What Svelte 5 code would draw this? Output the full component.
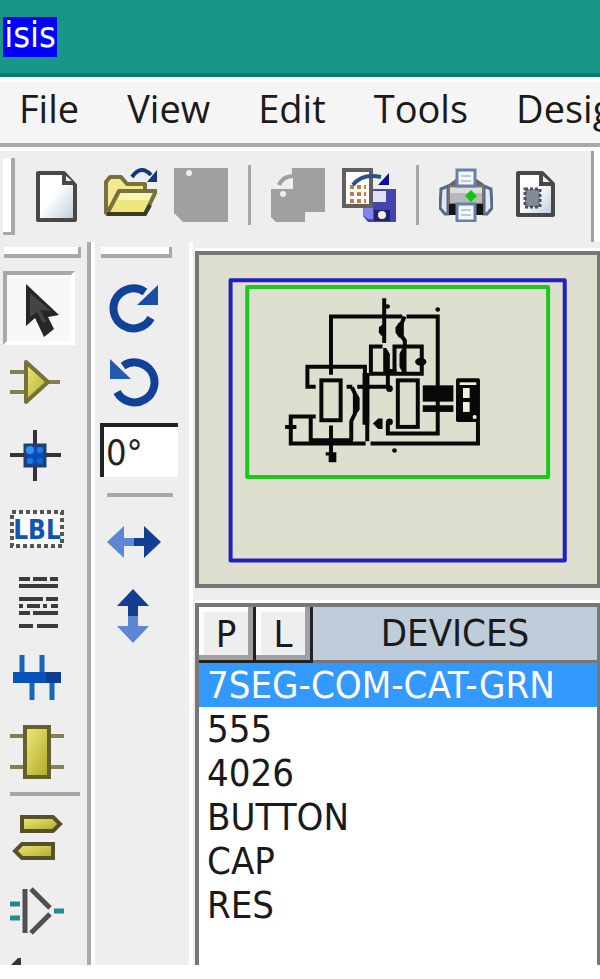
<script>
  let mode = "select";
  let angle = "0°";
  let selected = "7SEG-COM-CAT-GRN";

  const menus = ["File", "View", "Edit", "Tools", "Design"];
  const devices = ["7SEG-COM-CAT-GRN", "555", "4026", "BUTTON", "CAP", "RES"];
  const modes = [
    { id: "select", label: "Selection mode" },
    { id: "component", label: "Component mode" },
    { id: "junction", label: "Junction dot mode" },
    { id: "label", label: "Wire label mode" },
    { id: "script", label: "Text script mode" },
    { id: "bus", label: "Bus mode" },
    { id: "subcircuit", label: "Subcircuit mode" },
    { id: "terminal", label: "Terminals mode" },
    { id: "pin", label: "Device pins mode" },
    { id: "graph", label: "Graph mode" },
  ];
</script>

<div class="app">
  <header class="titlebar">
    <div class="logo">isis</div>
  </header>

  <nav class="menubar">
    {#each menus as menu}
      <button class="menu">{menu}</button>
    {/each}
  </nav>

  <div class="toolbar">
    <div class="grip"></div>
    <button class="tool" aria-label="New design">
      <svg viewBox="0 0 54 54">
        <defs>
          <linearGradient id="paper" x1="0" y1="0" x2="1" y2="1">
            <stop offset="0.45" stop-color="#fff" />
            <stop offset="1" stop-color="#b9cadb" />
          </linearGradient>
          <linearGradient id="gold" x1="0" y1="0" x2="1" y2="1">
            <stop offset="0" stop-color="#f0ea78" />
            <stop offset="1" stop-color="#b0a82c" />
          </linearGradient>
        </defs>
        <path d="M6 5H32L43 17V52H6Z" fill="url(#paper)" stroke="#484848" stroke-width="4" stroke-linejoin="round" />
        <path d="M32 6V15H42" fill="#eee" stroke="#484848" stroke-width="4" />
      </svg>
    </button>
    <button class="tool" aria-label="Open design">
      <svg viewBox="0 0 54 54">
        <path d="M3 46V14L7 9H18L24 16H42V25" fill="#f3e995" stroke="#77713b" stroke-width="4" stroke-linejoin="round" />
        <path d="M4 46L16 23H53L42 46Z" fill="#eee77f" stroke="#77713b" stroke-width="4" stroke-linejoin="round" />
        <path d="M18 25H49L46 32H15Z" fill="#fbf5b8" />
        <path d="M4 46H42L47 37" fill="none" stroke="#3e3b20" stroke-width="4" />
        <path d="M29 9Q38 -4 48 7" fill="none" stroke="#16377c" stroke-width="4" />
        <path d="M54 2V14H44Z" fill="#16377c" />
      </svg>
    </button>
    <button class="tool" aria-label="Save design" disabled>
      <svg viewBox="0 0 54 54">
        <path d="M0 0H54V54H9L0 45Z" fill="#a0a0a0" />
        <circle cx="15" cy="5" r="3" fill="#eee" />
      </svg>
    </button>
    <div class="divider"></div>
    <button class="tool" aria-label="Import section" disabled>
      <svg viewBox="0 0 54 54">
        <path d="M21 0H54V44H34V54H5L0 49V21H21Z" fill="#a0a0a0" />
        <path d="M8 17Q12 8 22 9V21H16Z" fill="#eee" />
        <path d="M8 17Q12 8 22 8" fill="none" stroke="#a0a0a0" stroke-width="4" />
        <circle cx="12" cy="26" r="3" fill="#eee" />
      </svg>
    </button>
    <button class="tool" aria-label="Export section">
      <svg viewBox="0 0 54 54">
        <path d="M22 21H54V54H26L21 48Z" fill="#4344ad" />
        <path d="M22 38H31V51H26L21 47Z" fill="#8385ec" />
        <path d="M30 23H44V34H30Z" fill="#dfe3f1" />
        <path d="M32 42H48V53H32Z" fill="#20236f" />
        <circle cx="40" cy="47" r="4" fill="#f4f3d8" />
        <path d="M2 2H29V38H2Z" fill="#fff" stroke="#606060" stroke-width="4" />
        <path d="M8 19H24M8 26H24M8 33H24" fill="none" stroke="#c97943" stroke-width="4" stroke-dasharray="4 3" />
        <path d="M11 17Q20 5 39 9" fill="none" stroke="#28518e" stroke-width="4" />
        <path d="M47 5V17H36Z" fill="#0c10a0" />
      </svg>
    </button>
    <div class="divider"></div>
    <button class="tool" aria-label="Print">
      <svg viewBox="0 0 54 54">
        <path d="M10 16L18 10H36L45 16V22H10Z" fill="#666" />
        <path d="M2 21L9 18V46H6L1 40Z" fill="#e3e9f2" stroke="#596a82" stroke-width="3" />
        <path d="M52 21L45 18V46H48L53 40Z" fill="#e3e9f2" stroke="#596a82" stroke-width="3" />
        <path d="M10 18H44V36H10Z" fill="#b9b9b9" stroke="#747474" stroke-width="2" />
        <path d="M11 20H43V25H11Z" fill="#ddd" />
        <path d="M10 36H44V47H10Z" fill="#151515" />
        <path d="M18 2H36V18H18Z" fill="#f5f8fb" stroke="#6680ad" stroke-width="3" />
        <path d="M18 36H36V53H18Z" fill="#f5f8fb" stroke="#6680ad" stroke-width="3" />
        <path d="M22 8H32M22 13H32M22 42H32M22 47H32" stroke="#bcc9d8" stroke-width="2" />
        <path d="M32 22L38 28L32 34L26 28Z" fill="#13c50f" />
      </svg>
    </button>
    <button class="tool" aria-label="Mark output area">
      <svg viewBox="0 0 54 54">
        <path d="M8 5H32L43 16V47H8Z" fill="url(#paper)" stroke="#484848" stroke-width="4" stroke-linejoin="round" />
        <path d="M31 6V16H42" fill="#eee" stroke="#484848" stroke-width="4" />
        <rect x="15" y="21" width="15" height="18" fill="#858b94" stroke="#4c535e" stroke-width="3" stroke-dasharray="3 2" />
      </svg>
    </button>
    <div class="toolbar-end"></div>
  </div>

  <main>
    <aside class="modes">
      <div class="grip-top"></div>
      {#each modes as item}
        {#if item.id === "terminal"}
          <hr />
        {/if}
        <button
          class="mode"
          class:active={mode === item.id}
          aria-label={item.label}
          on:click={() => (mode = item.id)}
        >
          <svg viewBox="0 0 54 54">
            {#if item.id === "select"}
              <path d="M16 3V45L25 37L34 56L44 48L38 36L49 34Z" fill="#262626" />
              <path d="M20 12V36L27 31L33 42L36 40L30 29L41 30Z" fill="#444" />
            {:else if item.id === "component"}
              <path d="M0 17H16M0 37H16M38 27H50" stroke="#858052" stroke-width="4" />
              <path d="M16 7L38 27L16 47Z" fill="url(#gold)" stroke="#77723a" stroke-width="4" stroke-linejoin="round" />
            {:else if item.id === "junction"}
              <path d="M25 1V52M0 26H51" stroke="#333" stroke-width="4" />
              <rect x="15" y="16" width="20" height="21" fill="#0b4bb3" stroke="#22406d" stroke-width="3" />
              <circle cx="20" cy="21" r="4" fill="#2f91ff" />
              <circle cx="30" cy="21" r="3" fill="#1d7bec" />
              <circle cx="20" cy="32" r="3" fill="#1d7bec" />
              <circle cx="30" cy="32" r="3" fill="#0d62d8" />
            {:else if item.id === "label"}
              <rect x="2" y="9" width="50" height="34" fill="#fafafa" stroke="#555" stroke-width="4" stroke-dasharray="4 3" />
              <text x="27" y="36" text-anchor="middle">LBL</text>
            {:else if item.id === "script"}
              <g stroke="#3c3c3c" stroke-width="4">
                <path d="M9 2H48" stroke-dasharray="11 3 14 3" />
                <path d="M9 9H48" />
                <path d="M9 22H48" stroke-dasharray="24 3" />
                <path d="M9 29H48" stroke-dasharray="4 4 13 3" />
                <path d="M9 36H48" stroke-dasharray="11 3 30 3" />
                <path d="M9 49H48" stroke-dasharray="14 4 30 3" />
              </g>
            {:else if item.id === "bus"}
              <path d="M12 4V26M32 4V26M22 26V49M42 26V49" stroke="#1767b8" stroke-width="5" />
              <path d="M3 21H51V32H3Z" fill="#0752bd" />
              <path d="M36 21H51V32H36Z" fill="#0b3f93" />
            {:else if item.id === "subcircuit"}
              <path d="M0 11H54M0 42H54" stroke="#858052" stroke-width="4" />
              <rect x="15" y="2" width="24" height="50" fill="url(#gold)" stroke="#66612c" stroke-width="4" />
            {:else if item.id === "terminal"}
              <path d="M12 7H43L50 14L43 21H12Z" fill="url(#gold)" stroke="#55512b" stroke-width="4" />
              <path d="M43 34H12L5 41L12 48H43Z" fill="url(#gold)" stroke="#55512b" stroke-width="4" />
            {:else if item.id === "pin"}
              <path d="M15 5V49M21 5L40 24M21 49L40 30" fill="none" stroke="#505050" stroke-width="5" />
              <path d="M0 20H10M0 34H10M44 27H54" stroke="#248b8b" stroke-width="5" />
            {:else}
              <path d="M0 8L8 0H11V8H0Z" fill="#333" />
              <path d="M2 8V50H50" fill="none" stroke="#333" stroke-width="4" />
            {/if}
          </svg>
        </button>
      {/each}
    </aside>

    <aside class="orient">
      <div class="grip-top"></div>
      <button class="turn" aria-label="Rotate clockwise">
        <svg viewBox="0 0 54 54">
          <path d="M38 11A20 20 0 1 0 44 37" fill="none" stroke="#12419a" stroke-width="8" />
          <path d="M51 4V24H30Z" fill="#1c4da5" />
        </svg>
      </button>
      <button class="turn" aria-label="Rotate anti-clockwise">
        <svg viewBox="0 0 54 54">
          <path d="M16 11A20 20 0 1 1 10 37" fill="none" stroke="#12419a" stroke-width="8" />
          <path d="M3 4V24H24Z" fill="#2459b0" />
        </svg>
      </button>
      <input class="angle" type="text" aria-label="Rotation angle" bind:value={angle} />
      <hr />
      <button class="turn" aria-label="Mirror horizontally">
        <svg viewBox="0 0 54 54">
          <path d="M0 27L17 11V23H27V31H17V43Z" fill="#5c86d6" />
          <path d="M54 27L37 11V23H27V31H37V43Z" fill="#123f92" />
        </svg>
      </button>
      <button class="turn" aria-label="Mirror vertically">
        <svg viewBox="0 0 54 54">
          <path d="M26 0L10 17H21V27H31V17H42Z" fill="#123f92" />
          <path d="M26 54L10 37H21V27H31V37H42Z" fill="#5c86d6" />
        </svg>
      </button>
    </aside>

    <section class="side">
      <div class="preview">
        <svg viewBox="24 45 1197 990" role="img" aria-label="Design overview">
          <g fill="none" stroke-width="12" stroke-linejoin="round">
            <rect x="119" y="121" width="1005" height="843" stroke="#2020c0" />
            <rect x="169" y="141" width="905" height="572" stroke="#1cc81c" />
          </g>
          <g fill="none" stroke="#080808" stroke-width="12">
            <!-- supply rail and upper wiring -->
            <path d="M421 405V230H635M648 230H742V582H592V545" />
            <path d="M581 175V310M642 230L634 250V290L643 302V325" />
            <path d="M576 320H541V400M535 402H694V320H612V402" />
            <path d="M592 400V445M500 441H592M468 441H485" />
            <path d="M375 441H350V381H523V555" />
            <path d="M530 400V605" />
            <!-- timer and counter bodies -->
            <rect x="392" y="422" width="58" height="120" />
            <rect x="622" y="422" width="60" height="140" />
            <path d="M484 443L493 462V522L482 545V600" />
            <!-- lower wiring -->
            <path d="M375 531H300V612H525M540 612H863V545M360 531V605M421 558V645M283 562H317" />
            <path d="M357 605H487" stroke-width="18" />
          </g>
          <g fill="#080808">
            <path d="M576 254H586V288H572L565 278V262Z" />
            <path d="M637 248H625L615 263V278L625 293H637Z" />
            <path d="M578 325H587L598 343V388H618V406H578Z" />
            <path d="M636 325H648V398H636L627 382V342Z" />
            <path d="M487 462H500L507 475V510L500 520H487Z" />
            <path d="M516 400H536V555H516Z" />
            <ellipse cx="691" cy="366" rx="17" ry="12" />
            <circle cx="591" cy="200" r="7" />
            <circle cx="597" cy="447" r="10" />
            <circle cx="597" cy="547" r="10" />
            <circle cx="742" cy="209" r="7" />
            <circle cx="612" cy="633" r="7" />
            <path d="M547 552L563 537H576V568H563Z" />
            <path d="M405 638H437V668H414V648H405Z" />
            <rect x="697" y="437" width="92" height="49" />
            <rect x="697" y="497" width="92" height="20" />
            <rect x="797" y="416" width="72" height="131" rx="5" />
          </g>
          <g fill="#f2f0df">
            <rect x="808" y="428" width="50" height="8" />
            <rect x="818" y="445" width="20" height="30" />
            <rect x="818" y="487" width="20" height="30" />
            <circle cx="853" cy="532" r="6" />
          </g>
        </svg>
      </div>

      <div class="picker">
        <div class="picker-head">
          <button class="pick" aria-label="Pick devices">P</button>
          <button class="pick" aria-label="Library manager">L</button>
          <h2>DEVICES</h2>
        </div>
        <ul>
          {#each devices as device}
            <li>
              <button
                class="device"
                class:selected={selected === device}
                on:click={() => (selected = device)}
              >
                {device}
              </button>
            </li>
          {/each}
        </ul>
      </div>
    </section>
  </main>
</div>

<style>
  :global(body) {
    margin: 0;
    background: #fff;
  }

  .app {
    display: flex;
    flex-direction: column;
    height: 100vh;
    padding-bottom: 14px;
    box-sizing: border-box;
    overflow: hidden;
    font-family: "DejaVu Sans Condensed", "DejaVu Sans", sans-serif;
    color: #1a1a1a;
  }

  button {
    margin: 0;
    padding: 0;
    border: none;
    background: none;
    color: inherit;
    font: inherit;
  }

  svg {
    display: block;
  }

  .titlebar {
    flex: none;
    display: flex;
    align-items: center;
    height: 73px;
    padding-left: 3px;
    background: #189788;
    border-bottom: 4px solid #078073;
  }

  .logo {
    width: 54px;
    height: 40px;
    background: #0000fe;
    color: #fff;
    font-size: 36px;
    line-height: 36px;
    text-align: center;
  }

  .menubar {
    flex: none;
    display: flex;
    height: 61px;
    background: #f5f5f5;
    border-top: 5px solid #fff;
    border-bottom: 4px solid #aaa;
    overflow: hidden;
  }

  .menu {
    flex: none;
    height: 52px;
    padding: 0 24px;
    font-family: "Open Sans", "Noto Sans", sans-serif;
    font-size: 38px;
    line-height: 52px;
  }

  .menu:first-child {
    padding-left: 19px;
  }

  .toolbar {
    flex: none;
    display: flex;
    align-items: center;
    gap: 17px;
    height: 91px;
    padding-left: 3px;
    border-top: 4px solid #fff;
    background: #eee;
  }

  .grip {
    width: 8px;
    height: 74px;
    border-right: 4px solid #a8a8a8;
    border-bottom: 3px solid #a8a8a8;
    background: #fff;
  }

  .tool {
    flex: none;
    width: 54px;
    height: 54px;
    margin-bottom: 4px;
  }

  .divider {
    flex: none;
    width: 3px;
    height: 60px;
    margin: 0 3px 4px;
    background: #a8a8a8;
  }

  .toolbar-end {
    width: 6px;
    height: 100%;
    margin-left: auto;
    border-left: 3px solid #a0a0a0;
    background: #fff;
  }

  main {
    flex: 1;
    display: flex;
    min-height: 0;
    overflow: hidden;
    background: #eee;
  }

  .modes {
    flex: none;
    width: 87px;
    border-right: 4px solid #aaa;
    overflow: hidden;
  }

  .grip-top {
    height: 7px;
    margin: 5px 6px 13px 4px;
    border-right: 3px solid #a8a8a8;
    border-bottom: 4px solid #a8a8a8;
    background: #fff;
  }

  .mode {
    display: flex;
    align-items: center;
    width: 72px;
    height: 74px;
    margin-left: 3px;
    padding-left: 7px;
    box-sizing: border-box;
  }

  .mode svg,
  .turn svg {
    width: 54px;
    height: 54px;
    overflow: visible;
  }

  .mode.active {
    padding-left: 3px;
    border: 4px solid #fff;
    border-top-color: #a8a8a8;
    border-left-color: #a8a8a8;
    background: #f8f8f8;
  }

  .mode text {
    fill: #1055b5;
    font-size: 26px;
    font-weight: bold;
  }

  hr {
    height: 4px;
    margin: 3px 7px 4px 10px;
    border: none;
    background: #a8a8a8;
  }

  .orient {
    flex: none;
    width: 98px;
    border-left: 4px solid #fff;
    box-sizing: border-box;
  }

  .orient .grip-top {
    margin: 5px 17px 13px 6px;
  }

  .turn {
    display: flex;
    align-items: center;
    width: 80px;
    height: 74px;
    padding-left: 12px;
  }

  .angle {
    display: block;
    width: 78px;
    height: 54px;
    margin: 4px 0 16px 5px;
    padding: 0 2px;
    box-sizing: border-box;
    border: none;
    border-top: 4px solid #222;
    border-left: 4px solid #222;
    background: #fff;
    color: #222;
    font: inherit;
    font-size: 36px;
    line-height: 50px;
  }

  .orient hr {
    margin: 0 16px 8px 12px;
  }

  .side {
    flex: 1;
    display: flex;
    flex-direction: column;
    gap: 15px;
    min-width: 0;
    padding: 9px 0 0 2px;
    border-left: 4px solid #fff;
  }

  .preview {
    flex: none;
    border: 4px solid #777;
    border-right-width: 3px;
    background: #dfdfcf;
    box-shadow: 0 -3px 0 #fff;
  }

  .preview svg {
    width: 100%;
  }

  .picker {
    flex: 1;
    min-height: 0;
    border: 4px solid #777;
    border-right-width: 3px;
    border-bottom: none;
    background: #fff;
    box-shadow: 0 -3px 0 #fff;
  }

  .picker-head {
    display: flex;
    height: 53px;
    border-bottom: 3px solid #777;
    background: #bfccda;
  }

  .pick {
    width: 57px;
    height: 56px;
    box-sizing: border-box;
    border-right: 3px solid #222;
    border-bottom: 3px solid #222;
    background: #eee;
    box-shadow:
      inset -5px -5px 0 #a0a0a0,
      inset 5px 5px 0 #fcfcfc;
    font-size: 38px;
    line-height: 50px;
  }

  h2 {
    flex: 1;
    margin: 0;
    font-size: 38px;
    font-weight: normal;
    line-height: 53px;
    text-align: center;
  }

  ul {
    margin: 0;
    padding: 0;
    list-style: none;
  }

  .device {
    display: block;
    width: 100%;
    height: 44px;
    padding-left: 8px;
    font-size: 38px;
    line-height: 44px;
    text-align: left;
    white-space: nowrap;
  }

  .device.selected {
    background: #3399ff;
    color: #fff;
  }
</style>
